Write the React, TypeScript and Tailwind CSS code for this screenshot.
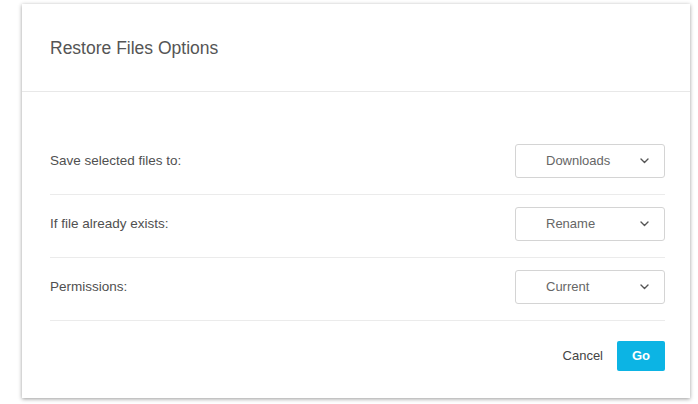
const rows = [
  { label: "Save selected files to:", value: "Downloads" },
  { label: "If file already exists:", value: "Rename" },
  { label: "Permissions:", value: "Current" },
];

function Chevron() {
  return (
    <svg width="9" height="6" viewBox="0 0 9 6" className="text-[#555]">
      <polyline
        points="1,1 4.5,4.5 8,1"
        fill="none"
        stroke="currentColor"
        strokeWidth="1.4"
        strokeLinecap="round"
        strokeLinejoin="round"
      />
    </svg>
  );
}

function Select({ value }: { value: string }) {
  return (
    <button
      type="button"
      className="flex h-[34px] w-[150px] items-center rounded-[3px] border border-[#d4d4d4] bg-white pl-[30px] pr-[15px] text-[13px] text-[#666]"
    >
      <span className="flex-1 text-left">{value}</span>
      <Chevron />
    </button>
  );
}

export default function App() {
  return (
    <div className="h-[404px] w-[698px] bg-white pt-[4px] pl-[22px] font-['Liberation_Sans',Arial,sans-serif]">
      <div className="flex h-[394px] w-[668px] flex-col bg-white shadow-[0_1px_4px_rgba(0,0,0,0.4)]">
        <header className="flex h-[88px] items-center border-b border-[#e8e8e8] px-[28px] pt-[1px]">
          <h1 className="text-[17.5px] text-[#555]">Restore Files Options</h1>
        </header>

        <div className="pl-[28px] pr-[25px] pt-[40px]">
          {rows.map((row) => (
            <div
              key={row.label}
              className="flex items-center justify-between border-b border-[#ebebeb] pt-[12px] pb-[16px]"
            >
              <span className="pt-[1px] text-[13.5px] text-[#505050]">{row.label}</span>
              <Select value={row.value} />
            </div>
          ))}

          <div className="flex items-center justify-end gap-[14px] pt-[20px]">
            <button type="button" className="text-[13px] text-[#444]">
              Cancel
            </button>
            <button
              type="button"
              className="h-[30px] w-[48px] rounded-[2px] bg-[#0cb4e4] text-[13px] font-bold text-white"
            >
              Go
            </button>
          </div>
        </div>
      </div>
    </div>
  );
}
